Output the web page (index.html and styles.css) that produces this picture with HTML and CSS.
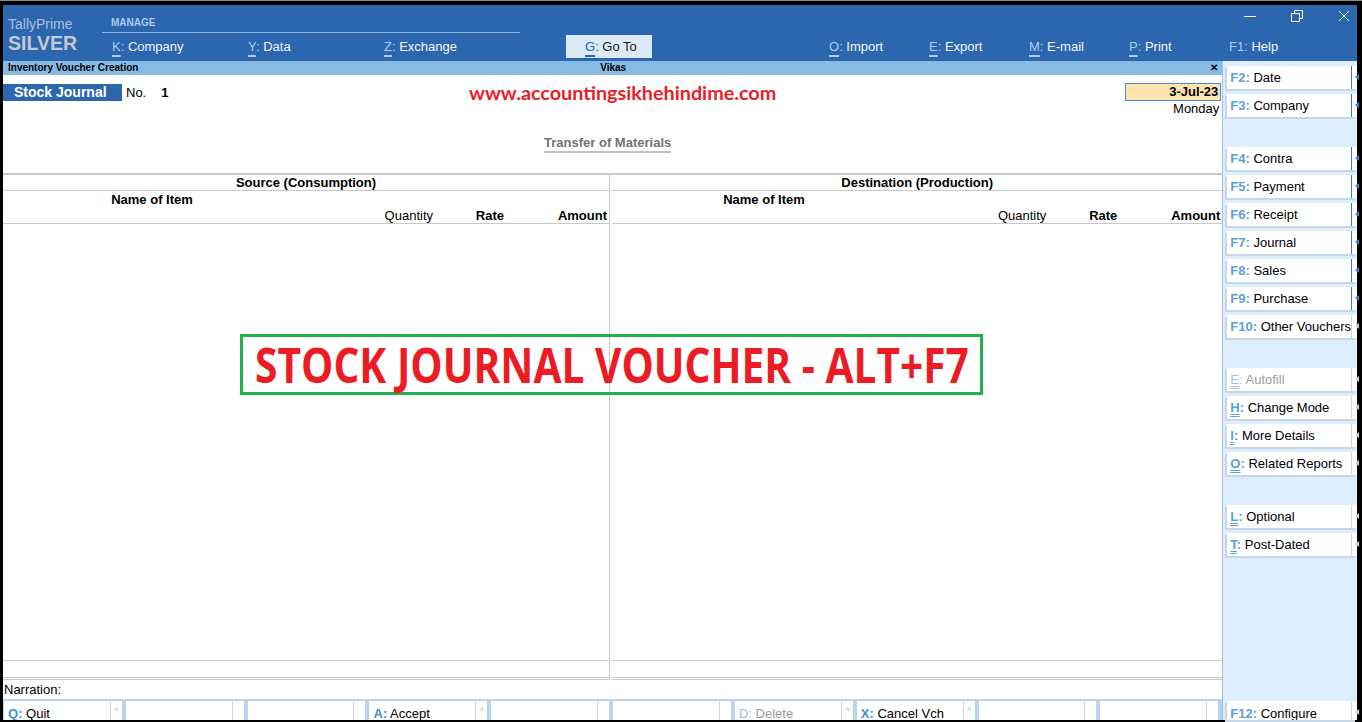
FILE: index.html
```html
<!DOCTYPE html>
<html>

<head>
    <meta charset="utf-8">
    <title>TallyPrime - Stock Journal</title>
    <link rel="stylesheet" href="styles.css">
</head>

<body>
    <div class="frame">
        <header class="topbar">
            <div class="brand">
                <div class="brand-name">TallyPrime</div>
                <div class="brand-ed">SILVER</div>
            </div>
            <div class="manage">
                <div class="manage-label">MANAGE</div>
                <div class="manage-items">
                    <span class="menu-item"><span class="key"><u>K</u>:</span> Company</span>
                    <span class="menu-item"><span class="key"><u>Y</u>:</span> Data</span>
                    <span class="menu-item"><span class="key"><u>Z</u>:</span> Exchange</span>
                </div>
            </div>
            <span class="menu-item goto"><span class="key"><u>G</u>:</span> Go To</span>
            <div class="menu-right">
                <span class="menu-item"><span class="key"><u>O</u>:</span> Import</span>
                <span class="menu-item"><span class="key"><u>E</u>:</span> Export</span>
                <span class="menu-item"><span class="key"><u>M</u>:</span> E-mail</span>
                <span class="menu-item"><span class="key"><u>P</u>:</span> Print</span>
                <span class="menu-item"><span class="key">F1:</span> Help</span>
            </div>
            <div class="winctl">
                <span class="winbtn"><svg width="12" height="12" viewBox="0 0 12 12"><path d="M0 6.5h12" stroke="#fff" stroke-width="1" /></svg></span>
                <span class="winbtn"><svg width="12" height="12" viewBox="0 0 12 12" fill="none" stroke="#fff" stroke-width="1"><path d="M0.5 3.5h8v8h-8z" /><path d="M3.5 3.5v-3h8v8h-3" /></svg></span>
                <span class="winbtn"><svg width="12" height="12" viewBox="0 0 12 12" fill="none" stroke="#fff" stroke-width="1"><path d="M1 1l10 10M11 1l-10 10" /></svg></span>
            </div>
        </header>

        <div class="workspace">
            <main class="voucher">
                <div class="titlebar">
                    <span>Inventory Voucher Creation</span>
                    <span class="titlebar-co">Vikas</span>
                    <span class="titlebar-close">&#x2715;</span>
                </div>

                <div class="vch-head">
                    <div class="vch-left">
                        <span class="vch-type">Stock Journal</span>
                        <span class="vch-no">No.</span>
                        <span class="vch-num">1</span>
                    </div>
                    <div class="site">www.accountingsikhehindime.com</div>
                    <div class="vch-date">3-Jul-23</div>
                </div>
                <div class="vch-day">Monday</div>
                <div class="vch-title"><span>Transfer of Materials</span></div>

                <div class="entry">
                    <div class="half half-src">
                        <div class="half-title">Source (Consumption)</div>
                        <div class="cols">
                            <div class="col-name">Name of Item</div>
                            <div class="col-qty">Quantity</div>
                            <div class="col-rate">Rate</div>
                            <div class="col-amt">Amount</div>
                        </div>
                        <div class="rows"></div>
                        <div class="totals"></div>
                    </div>
                    <div class="half half-dst">
                        <div class="half-title">Destination (Production)</div>
                        <div class="cols">
                            <div class="col-name">Name of Item</div>
                            <div class="col-qty">Quantity</div>
                            <div class="col-rate">Rate</div>
                            <div class="col-amt">Amount</div>
                        </div>
                        <div class="rows"></div>
                        <div class="totals"></div>
                    </div>
                </div>

                <div class="narration">Narration:</div>

                <div class="actions">
                    <div class="act"><span class="act-label"><span class="key"><u>Q</u>:</span> Quit</span><span class="act-caret">^</span></div>
                    <div class="act"><span class="act-label"></span><span class="act-caret"></span></div>
                    <div class="act"><span class="act-label"></span><span class="act-caret"></span></div>
                    <div class="act"><span class="act-label"><span class="key"><u>A</u>:</span> Accept</span><span class="act-caret">^</span></div>
                    <div class="act"><span class="act-label"></span><span class="act-caret"></span></div>
                    <div class="act"><span class="act-label"></span><span class="act-caret"></span></div>
                    <div class="act off"><span class="act-label"><span class="key">D:</span> Delete</span><span class="act-caret">^</span></div>
                    <div class="act"><span class="act-label"><span class="key">X:</span> Cancel Vch</span><span class="act-caret">^</span></div>
                    <div class="act"><span class="act-label"></span><span class="act-caret"></span></div>
                    <div class="act"><span class="act-label"></span><span class="act-caret"></span></div>
                </div>

                <div class="watermark"><span>STOCK JOURNAL VOUCHER - ALT+F7</span></div>
            </main>

            <aside class="side">
                <div class="sbtn"><span class="sbtn-label"><span class="key">F2:</span> Date</span><span class="sbtn-arrow"></span></div>
                <div class="sbtn"><span class="sbtn-label"><span class="key">F3:</span> Company</span><span class="sbtn-arrow"></span></div>
                <div class="sgap"></div>
                <div class="sbtn"><span class="sbtn-label"><span class="key">F4:</span> Contra</span><span class="sbtn-arrow"></span></div>
                <div class="sbtn"><span class="sbtn-label"><span class="key">F5:</span> Payment</span><span class="sbtn-arrow"></span></div>
                <div class="sbtn"><span class="sbtn-label"><span class="key">F6:</span> Receipt</span><span class="sbtn-arrow"></span></div>
                <div class="sbtn"><span class="sbtn-label"><span class="key">F7:</span> Journal</span><span class="sbtn-arrow"></span></div>
                <div class="sbtn"><span class="sbtn-label"><span class="key">F8:</span> Sales</span><span class="sbtn-arrow"></span></div>
                <div class="sbtn"><span class="sbtn-label"><span class="key">F9:</span> Purchase</span><span class="sbtn-arrow"></span></div>
                <div class="sbtn dim"><span class="sbtn-label"><span class="key">F10:</span> Other Vouchers</span><span class="sbtn-arrow"></span></div>
                <div class="sgap"></div>
                <div class="sbtn dim off"><span class="sbtn-label"><span class="key"><u>E</u>:</span> Autofill</span><span class="sbtn-arrow"></span></div>
                <div class="sbtn dim"><span class="sbtn-label"><span class="key"><u>H</u>:</span> Change Mode</span><span class="sbtn-arrow"></span></div>
                <div class="sbtn dim"><span class="sbtn-label"><span class="key"><u>I</u>:</span> More Details</span><span class="sbtn-arrow"></span></div>
                <div class="sbtn dim"><span class="sbtn-label"><span class="key"><u>O</u>:</span> Related Reports</span><span class="sbtn-arrow"></span></div>
                <div class="sgap"></div>
                <div class="sbtn dim"><span class="sbtn-label"><span class="key"><u>L</u>:</span> Optional</span><span class="sbtn-arrow"></span></div>
                <div class="sbtn dim"><span class="sbtn-label"><span class="key"><u>T</u>:</span> Post-Dated</span><span class="sbtn-arrow"></span></div>
                <div class="sbtn dim sbtn-last"><span class="sbtn-label"><span class="key">F12:</span> Configure</span><span class="sbtn-arrow"></span></div>
            </aside>
        </div>
    </div>
</body>

</html>
```

FILE: styles.css
```css
* {
    box-sizing: border-box;
}

html,
body {
    margin: 0;
    height: 100%;
    overflow: hidden;
}

body {
    font-family: 'Liberation Sans', Arial, sans-serif;
    font-size: 13px;
    color: #000;
    background: #000;
}

u {
    text-decoration: none;
}

.frame {
    height: 722px;
    display: flex;
    flex-direction: column;
    border-top: 1px solid #8a8a8a;
    padding: 4px 5px 2px 3px;
    background: #000;
    overflow: hidden;
}

/* top menu bar */

.topbar {
    position: relative;
    height: 56px;
    flex: none;
    display: flex;
    align-items: flex-end;
    padding-bottom: 3px;
    background: #2b66ae;
    overflow: hidden;
}

.brand {
    align-self: stretch;
    width: 99px;
    padding: 11px 0 0 5px;
}

.brand-name {
    font-size: 14px;
    line-height: 16px;
    color: #a9c2e0;
}

.brand-ed {
    font-size: 19.5px;
    line-height: 22px;
    font-weight: bold;
    color: #c3c9d1;
}

.manage {
    align-self: stretch;
    width: 418px;
    display: flex;
    flex-direction: column;
}

.manage-label {
    height: 28px;
    padding: 12px 0 0 9px;
    font-size: 10px;
    line-height: 12px;
    font-weight: bold;
    color: #a9c8ee;
    border-bottom: 1px solid #8fb4de;
    margin-bottom: 2px;
}

.manage-items {
    display: flex;
    padding-left: 10px;
}

.menu-item {
    width: 137px;
    height: 23px;
    line-height: 23px;
    color: #f4f7fb;
    white-space: nowrap;
}

.menu-item .key {
    color: #a9cdf2;
}

.menu-item u {
    text-decoration: underline;
    text-decoration-thickness: 2px;
    text-underline-offset: 4px;
}

.goto {
    width: 86px;
    margin-left: 46px;
    padding-left: 19px;
    background: #dce9f7;
    color: #1a1a1a;
}

.goto .key {
    color: #2b66ae;
}

.menu-right {
    display: flex;
    margin-left: 177px;
}

.menu-right .menu-item {
    width: 100px;
}

.winctl {
    position: absolute;
    top: 0;
    right: -10px;
    display: flex;
}

.winbtn {
    width: 47px;
    height: 22px;
    display: flex;
    align-items: center;
    justify-content: center;
}

/* workspace */

.workspace {
    flex: 1;
    display: flex;
    min-height: 0;
}

.voucher {
    position: relative;
    width: 1220px;
    display: flex;
    flex-direction: column;
    background: #fff;
}

.titlebar {
    height: 14px;
    display: grid;
    grid-template-columns: 1fr auto 1fr;
    padding: 0 4px 0 5px;
    background: #87bbe6;
    font-size: 10px;
    line-height: 14px;
    font-weight: bold;
}

.titlebar-close {
    justify-self: end;
    font-size: 10px;
}

.vch-head {
    height: 18px;
    margin-top: 8px;
    display: grid;
    grid-template-columns: 1fr auto 1fr;
    align-items: center;
}

.vch-left {
    display: flex;
    align-items: center;
    height: 18px;
}

.vch-type {
    width: 119px;
    height: 17px;
    padding-left: 11px;
    background: #2b66ae;
    color: #fff;
    font-size: 14px;
    line-height: 17px;
    font-weight: bold;
}

.vch-no {
    margin-left: 4px;
}

.vch-num {
    margin-left: 15px;
    font-weight: bold;
}

.site {
    padding-left: 20px;
    color: #ec1c24;
    font-family: Lato, 'Open Sans', sans-serif;
    font-size: 19.8px;
    font-weight: bold;
    line-height: 18px;
}

.vch-date {
    justify-self: end;
    width: 96px;
    height: 18px;
    margin-right: 1px;
    padding-right: 2px;
    background: #fee4b1;
    border: 1px solid #3d8ee0;
    text-align: right;
    font-weight: bold;
    line-height: 16px;
}

.vch-day {
    text-align: right;
    line-height: 16px;
    padding-right: 3px;
}

.vch-title {
    margin-top: 18px;
    text-align: center;
    padding-right: 10px;
}

.vch-title span {
    display: inline-block;
    line-height: 16px;
    font-weight: bold;
    color: #727272;
    border-bottom: 2px solid #c2c2c2;
}

/* entry grid */

.entry {
    flex: 1;
    display: flex;
    margin-top: 20px;
    border-top: 2px solid #c9c9c9;
}

.half {
    display: flex;
    flex-direction: column;
}

.half-src {
    width: 607px;
    border-right: 1px solid #c9c9c9;
}

.half-dst {
    flex: 1;
    padding-left: 2px;
}

.half-title {
    height: 16px;
    line-height: 15px;
    text-align: center;
    font-weight: bold;
    border-bottom: 1px solid #c9c9c9;
}

.cols {
    display: grid;
    grid-template-columns: 298px 1fr 100px 71px 103px;
    grid-template-rows: 16px 16px;
    border-bottom: 1px solid #c9c9c9;
}

.col-name {
    grid-column: 1;
    grid-row: 1;
    text-align: center;
    font-weight: bold;
    line-height: 17px;
}

.col-qty,
.col-rate,
.col-amt {
    grid-row: 2;
    text-align: right;
    line-height: 17px;
}

.col-qty {
    grid-column: 3;
    padding-right: 2px;
}

.col-rate {
    grid-column: 4;
    font-weight: bold;
    padding-right: 2px;
}

.col-amt {
    grid-column: 5;
    font-weight: bold;
    padding-right: 2px;
}

.half-dst .col-name {
    padding-left: 6px;
}

.rows {
    flex: 1;
    border-bottom: 1px solid #c9c9c9;
}

.totals {
    height: 19px;
    border-bottom: 3px double #c9c9c9;
}

.narration {
    height: 19px;
    line-height: 20px;
    padding-left: 1px;
}

/* bottom buttons */

.actions {
    height: 21px;
    display: grid;
    grid-template-columns: repeat(10, 1fr);
    gap: 4px;
    padding: 2px 4px 0 1px;
    background: #b8d5ef;
}

.act {
    display: flex;
    background: #fff;
    overflow: hidden;
}

.act-label {
    flex: 1;
    padding: 3px 0 0 4px;
    line-height: 19px;
    white-space: nowrap;
}

.act-label .key {
    color: #3d8fd8;
    font-weight: bold;
}

.act-label u {
    text-decoration: underline;
    text-underline-offset: 2px;
}

.act-caret {
    width: 12px;
    padding-top: 1px;
    border-left: 1px solid #d6d6d6;
    font-size: 9px;
    line-height: 19px;
    color: #b8b8b8;
    text-align: center;
}

.act.off .key {
    color: #a2bdd6;
    font-weight: normal;
}

.act.off .act-label {
    color: #9b9b9b;
}

.watermark {
    position: absolute;
    top: 273px;
    left: 237px;
    width: 743px;
    height: 61px;
    display: flex;
    align-items: center;
    justify-content: center;
    border: 3px solid #22b14c;
    color: #ec1c24;
}

.watermark span {
    flex: none;
    white-space: nowrap;
    font-family: 'Open Sans', sans-serif;
    font-size: 49px;
    font-weight: bold;
    line-height: 55px;
    transform: scaleX(0.83);
}

/* right button panel */

.side {
    flex: 1;
    display: flex;
    flex-direction: column;
    padding-top: 5px;
    background: #deedfb;
    border-left: 1px solid #9cc3e7;
}

.sbtn {
    flex: none;
    display: flex;
    height: 23px;
    margin: 0 0 5px 4px;
    background: #fff;
    box-shadow: -2px 2px 0 #c8d7e5;
}

.sbtn-label {
    flex: 1;
    padding-left: 3px;
    line-height: 23px;
    white-space: nowrap;
    overflow: hidden;
}

.sbtn-label .key {
    color: #5c9fdc;
    font-weight: bold;
}

.sbtn-label u {
    text-decoration: underline double;
    text-underline-offset: 2px;
}

.sbtn-arrow {
    position: relative;
    width: 6px;
    border-left: 1px solid #3f77bf;
}

.sbtn-arrow::after {
    content: "";
    position: absolute;
    top: 8px;
    left: 3px;
    border-top: 3px solid transparent;
    border-bottom: 3px solid transparent;
    border-right: 4px solid #3f77bf;
}

.sbtn.dim .sbtn-arrow {
    border-left-color: #d3d3d3;
}

.sbtn.dim .sbtn-arrow::after {
    border-right-color: #cfcfcf;
}

.sbtn.off .key {
    color: #a7bfd6;
    font-weight: normal;
}

.sbtn.off .sbtn-label {
    color: #a0a0a0;
}

.sgap {
    flex: none;
    height: 25px;
}

.sbtn-last {
    margin: auto 0 0 4px;
    height: 19px;
}

.sbtn-last .sbtn-label {
    padding-top: 3px;
    line-height: 19px;
}
```
